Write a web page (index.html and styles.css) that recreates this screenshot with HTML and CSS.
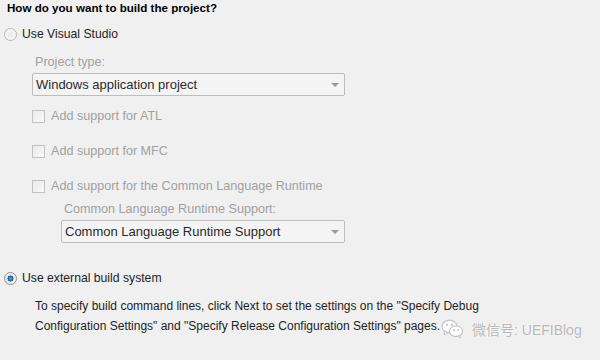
FILE: index.html
```html
<!DOCTYPE html>
<html lang="en">
<head>
    <meta charset="UTF-8">
    <title>Build options</title>
    <link rel="stylesheet" href="styles.css">
</head>
<body>
    <div class="page">
        <h1 class="title">How do you want to build the project?</h1>

        <label class="option">
            <span class="radio"></span>
            <span>Use Visual Studio</span>
        </label>

        <div class="vs-group">
            <div class="caption">Project type:</div>
            <div class="combo">
                <span>Windows application project</span>
                <span class="arrow"></span>
            </div>

            <label class="check"><span class="box"></span>Add support for ATL</label>
            <label class="check"><span class="box"></span>Add support for MFC</label>
            <label class="check"><span class="box"></span>Add support for the Common Language Runtime</label>

            <div class="clr-group">
                <div class="caption">Common Language Runtime Support:</div>
                <div class="combo">
                    <span>Common Language Runtime Support</span>
                    <span class="arrow"></span>
                </div>
            </div>
        </div>

        <label class="option option-ext">
            <span class="radio checked"></span>
            <span>Use external build system</span>
        </label>

        <p class="note">To specify build command lines, click Next to set the settings on the "Specify Debug Configuration Settings" and "Specify Release Configuration Settings" pages.</p>

        <div class="watermark">
            <svg width="24" height="20" viewBox="0 0 24 20">
                <ellipse cx="8.5" cy="7.5" rx="7.5" ry="6.3" fill="#fff" stroke="#c4c4c4" stroke-width="1.2"/>
                <path d="M4 12.5 L3 16 L7 13.6 Z" fill="#fff" stroke="#c4c4c4" stroke-width="1"/>
                <ellipse cx="15" cy="12.2" rx="6.5" ry="5.4" fill="#fff" stroke="#c4c4c4" stroke-width="1.2"/>
                <path d="M18.5 16.5 L20 19 L16.5 17.3 Z" fill="#fff" stroke="#c4c4c4" stroke-width="1"/>
                <circle cx="6" cy="5.8" r="1" fill="#b8b8b8"/>
                <circle cx="11" cy="5.8" r="1" fill="#b8b8b8"/>
                <circle cx="13" cy="11.3" r="0.9" fill="#b8b8b8"/>
                <circle cx="17.2" cy="11.3" r="0.9" fill="#b8b8b8"/>
            </svg>
            <span>微信号: UEFIBlog</span>
        </div>
    </div>
</body>
</html>
```

FILE: styles.css
```css
body {
    margin: 0;
    background-color: #f0f0f0;
    font-family: 'Liberation Sans', 'Noto Sans CJK SC', sans-serif;
    font-size: 12px;
    color: #1e1e1e;
}

.page {
    position: relative;
    width: 600px;
    height: 360px;
    overflow: hidden;
}

.title {
    margin: 0;
    padding: 1px 0 0 7px;
    font-size: 11.6px;
    font-weight: bold;
    line-height: 14px;
    color: #000;
}

.option {
    display: flex;
    align-items: center;
    gap: 5px;
    margin: 12px 0 0 4px;
    height: 14px;
    font-size: 12.2px;
}

.radio {
    width: 11px;
    height: 11px;
    border-radius: 50%;
    border: 1px solid #b4b4b4;
    background: radial-gradient(circle at 50% 50%, #e6e6e6 0, #f6f6f6 60%, #fff 100%);
    box-sizing: content-box;
}

.radio.checked {
    background: radial-gradient(circle at 50% 50%, #5ea0e0 0, #1f64b4 30%, #2a5c9a 36%, #eaeaea 42%, #fafafa 100%);
    border-color: #8e8f8f;
}

.vs-group {
    padding: 14px 0 0 32px;
    color: #a0a0a0;
    font-size: 12.6px;
}

.caption {
    padding-left: 3px;
    line-height: 14px;
}

.combo {
    display: flex;
    align-items: center;
    justify-content: space-between;
    width: 313px;
    height: 23px;
    margin-top: 4px;
    padding: 0 5px 0 3px;
    box-sizing: border-box;
    border: 1px solid #bdbdbd;
    border-radius: 2px;
    background-color: #f4f4f4;
    color: #2a2a2a;
    font-size: 13px;
}

.arrow {
    width: 0;
    height: 0;
    border-left: 4px solid transparent;
    border-right: 4px solid transparent;
    border-top: 4px solid #9a9a9a;
}

.check {
    display: flex;
    align-items: center;
    gap: 6px;
    height: 14px;
    margin-top: 21px;
}

.check:first-of-type {
    margin-top: 13px;
}

.box {
    width: 11px;
    height: 11px;
    border: 1px solid #c2c2c2;
    background: linear-gradient(135deg, #e8e8e8, #fbfbfb);
}

.clr-group {
    padding: 9px 0 0 29px;
}

.clr-group .combo {
    width: 284px;
}

.option-ext {
    margin-top: 28px;
}

.note {
    width: 475px;
    margin: 11px 0 0 35px;
    line-height: 20px;
    color: #1e1e1e;
}

.watermark {
    position: absolute;
    left: 441px;
    top: 319px;
    display: flex;
    align-items: center;
    gap: 7px;
    color: #b8b8b8;
    font-size: 14px;
    text-shadow: 0 0 2px #fff;
}
```
